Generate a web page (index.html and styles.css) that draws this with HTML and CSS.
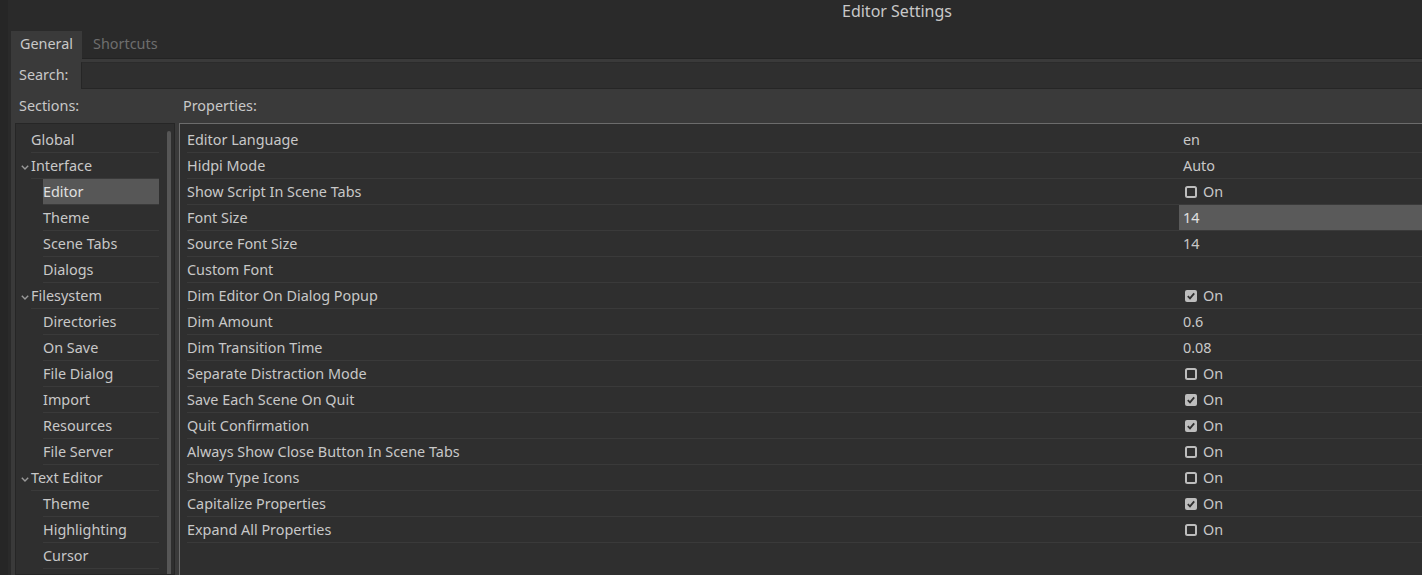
FILE: index.html
```html
<!DOCTYPE html>
<html>
<head>
<meta charset="utf-8">
<link rel="stylesheet" href="styles.css">
</head>
<body>
<div class="window">
  <div class="titlebar"><span class="title">Editor Settings</span></div>
  <div class="tabs">
    <div class="tab active">General</div>
    <div class="tab">Shortcuts</div>
  </div>
  <div class="panel">
    <div class="search-row">
      <div class="search-label">Search:</div>
      <div class="search-field"></div>
    </div>
    <div class="label-row">
      <div class="sec-label">Sections:</div>
      <div class="prop-label">Properties:</div>
    </div>
    <div class="content">
      <div class="tree">
        <div class="tree-list">
          <div class="titem l0"><span class="indent"></span><span class="tlabel">Global</span></div>
          <div class="titem l0"><span class="indent"><svg class="chev" width="8" height="5" viewBox="0 0 8 5"><polyline points="0.8,0.8 4,4 7.2,0.8" fill="none" stroke="#9a9a9a" stroke-width="1.4"/></svg></span><span class="tlabel">Interface</span></div>
          <div class="titem l1"><span class="indent"></span><span class="tlabel sel">Editor</span></div>
          <div class="titem l1"><span class="indent"></span><span class="tlabel">Theme</span></div>
          <div class="titem l1"><span class="indent"></span><span class="tlabel">Scene Tabs</span></div>
          <div class="titem l1"><span class="indent"></span><span class="tlabel">Dialogs</span></div>
          <div class="titem l0"><span class="indent"><svg class="chev" width="8" height="5" viewBox="0 0 8 5"><polyline points="0.8,0.8 4,4 7.2,0.8" fill="none" stroke="#9a9a9a" stroke-width="1.4"/></svg></span><span class="tlabel">Filesystem</span></div>
          <div class="titem l1"><span class="indent"></span><span class="tlabel">Directories</span></div>
          <div class="titem l1"><span class="indent"></span><span class="tlabel">On Save</span></div>
          <div class="titem l1"><span class="indent"></span><span class="tlabel">File Dialog</span></div>
          <div class="titem l1"><span class="indent"></span><span class="tlabel">Import</span></div>
          <div class="titem l1"><span class="indent"></span><span class="tlabel">Resources</span></div>
          <div class="titem l1"><span class="indent"></span><span class="tlabel">File Server</span></div>
          <div class="titem l0"><span class="indent"><svg class="chev" width="8" height="5" viewBox="0 0 8 5"><polyline points="0.8,0.8 4,4 7.2,0.8" fill="none" stroke="#9a9a9a" stroke-width="1.4"/></svg></span><span class="tlabel">Text Editor</span></div>
          <div class="titem l1"><span class="indent"></span><span class="tlabel">Theme</span></div>
          <div class="titem l1"><span class="indent"></span><span class="tlabel">Highlighting</span></div>
          <div class="titem l1"><span class="indent"></span><span class="tlabel">Cursor</span></div>
        </div>
        <div class="tree-scroll"><div class="thumb"></div></div>
      </div>
      <div class="props">
        <div class="prow"><div class="pname">Editor Language</div><div class="pval">en</div></div>
        <div class="prow"><div class="pname">Hidpi Mode</div><div class="pval">Auto</div></div>
        <div class="prow"><div class="pname">Show Script In Scene Tabs</div><div class="pval"><svg class="cb" width="12" height="12" viewBox="0 0 12 12"><rect x="1" y="1" width="10" height="10" rx="1.5" fill="none" stroke="#bdbdbd" stroke-width="2"/></svg><span>On</span></div></div>
        <div class="prow"><div class="pname">Font Size</div><div class="pval hl">14</div></div>
        <div class="prow"><div class="pname">Source Font Size</div><div class="pval">14</div></div>
        <div class="prow"><div class="pname">Custom Font</div><div class="pval"></div></div>
        <div class="prow"><div class="pname">Dim Editor On Dialog Popup</div><div class="pval"><svg class="cb" width="12" height="12" viewBox="0 0 12 12"><rect x="0" y="0" width="12" height="12" rx="2" fill="#bdbdbd"/><polyline points="2.8,6.2 5,8.4 9.2,3.4" fill="none" stroke="#2f2f2f" stroke-width="1.8"/></svg><span>On</span></div></div>
        <div class="prow"><div class="pname">Dim Amount</div><div class="pval">0.6</div></div>
        <div class="prow"><div class="pname">Dim Transition Time</div><div class="pval">0.08</div></div>
        <div class="prow"><div class="pname">Separate Distraction Mode</div><div class="pval"><svg class="cb" width="12" height="12" viewBox="0 0 12 12"><rect x="1" y="1" width="10" height="10" rx="1.5" fill="none" stroke="#bdbdbd" stroke-width="2"/></svg><span>On</span></div></div>
        <div class="prow"><div class="pname">Save Each Scene On Quit</div><div class="pval"><svg class="cb" width="12" height="12" viewBox="0 0 12 12"><rect x="0" y="0" width="12" height="12" rx="2" fill="#bdbdbd"/><polyline points="2.8,6.2 5,8.4 9.2,3.4" fill="none" stroke="#2f2f2f" stroke-width="1.8"/></svg><span>On</span></div></div>
        <div class="prow"><div class="pname">Quit Confirmation</div><div class="pval"><svg class="cb" width="12" height="12" viewBox="0 0 12 12"><rect x="0" y="0" width="12" height="12" rx="2" fill="#bdbdbd"/><polyline points="2.8,6.2 5,8.4 9.2,3.4" fill="none" stroke="#2f2f2f" stroke-width="1.8"/></svg><span>On</span></div></div>
        <div class="prow"><div class="pname">Always Show Close Button In Scene Tabs</div><div class="pval"><svg class="cb" width="12" height="12" viewBox="0 0 12 12"><rect x="1" y="1" width="10" height="10" rx="1.5" fill="none" stroke="#bdbdbd" stroke-width="2"/></svg><span>On</span></div></div>
        <div class="prow"><div class="pname">Show Type Icons</div><div class="pval"><svg class="cb" width="12" height="12" viewBox="0 0 12 12"><rect x="1" y="1" width="10" height="10" rx="1.5" fill="none" stroke="#bdbdbd" stroke-width="2"/></svg><span>On</span></div></div>
        <div class="prow"><div class="pname">Capitalize Properties</div><div class="pval"><svg class="cb" width="12" height="12" viewBox="0 0 12 12"><rect x="0" y="0" width="12" height="12" rx="2" fill="#bdbdbd"/><polyline points="2.8,6.2 5,8.4 9.2,3.4" fill="none" stroke="#2f2f2f" stroke-width="1.8"/></svg><span>On</span></div></div>
        <div class="prow"><div class="pname">Expand All Properties</div><div class="pval"><svg class="cb" width="12" height="12" viewBox="0 0 12 12"><rect x="1" y="1" width="10" height="10" rx="1.5" fill="none" stroke="#bdbdbd" stroke-width="2"/></svg><span>On</span></div></div>
      </div>
    </div>
  </div>
</div>
</body>
</html>
```
FILE: styles.css
```css
* { box-sizing: border-box; }
html, body {
  margin: 0;
  padding: 0;
  height: 575px;
  overflow: hidden;
  background: #2a2a2a;
}
body {
  font-family: "Noto Sans", "DejaVu Sans", sans-serif;
  font-size: 14.4px;
  color: #c8c8c8;
}
.window {
  height: 575px;
  display: flex;
  flex-direction: column;
  padding-left: 11px;
  background: linear-gradient(to right, #262626 0, #262626 8px, #2a2a2a 8px);
}
.titlebar {
  height: 31px;
  flex: none;
  padding-left: 831px;
  line-height: 22px;
}
.title { color: #c8c8c8; font-size: 16px; }
.tabs {
  display: flex;
  height: 28px;
  flex: none;
  border-bottom: 1px solid #232323;
}
.tab {
  height: 28px;
  line-height: 26px;
  padding: 0 9px 0 11px;
  color: #6e6e6e;
}
.tab.active {
  background: #3a3a3a;
  color: #c8c8c8;
  width: 71px;
  padding-left: 9px;
}
.panel {
  flex: 1;
  background: #3a3a3a;
  display: flex;
  flex-direction: column;
  padding: 3px 0 0 4px;
  min-height: 0;
}
.search-row {
  display: flex;
  height: 27px;
  flex: none;
}
.search-label {
  width: 66px;
  padding-left: 4px;
  line-height: 26px;
}
.search-field {
  flex: 1;
  background: #2f2f2f;
  border-left: 1px solid #262626;
  border-bottom: 1px solid #262626;
  border-top: 1px solid #2b2b2b;
}
.label-row {
  display: flex;
  height: 34px;
  flex: none;
  line-height: 34px;
}
.sec-label { width: 164px; padding-left: 4px; }
.prop-label { padding-left: 4px; }
.content {
  flex: 1;
  display: flex;
  gap: 4px;
  min-height: 0;
}
.tree {
  width: 160px;
  flex: none;
  background: #2f2f2f;
  border: 1px solid #262626;
  display: flex;
  padding-top: 3px;
}
.tree-list {
  width: 143px;
  flex: none;
}
.titem {
  display: flex;
  height: 26px;
}
.indent {
  flex: none;
  display: flex;
  justify-content: flex-end;
  align-items: center;
  padding-right: 2px;
  padding-top: 2px;
}
.l0 .indent { width: 15px; }
.l1 .indent { width: 27px; }
.tlabel {
  flex: 1;
  height: 26px;
  line-height: 25px;
  border-bottom: 1px solid #3a3a3a;
  white-space: nowrap;
}
.tlabel.sel {
  background: #575757;
  color: #e0e0e0;
}
.tree-scroll {
  margin-left: 8px;
  width: 4px;
  padding-top: 4px;
  display: flex;
}
.thumb {
  flex: 1;
  background: #565656;
  border-radius: 2px 2px 0 0;
}
.props {
  flex: 1;
  background: #2f2f2f;
  border-top: 1px solid #6c6c6c;
  border-left: 1px solid #6c6c6c;
  padding: 3px 0 0 7px;
}
.prow {
  display: flex;
  height: 26px;
  border-bottom: 1px solid #3a3a3a;
}
.pname {
  width: 992px;
  flex: none;
  line-height: 25px;
}
.pval {
  flex: 1;
  padding-left: 4px;
  line-height: 25px;
  display: flex;
  align-items: center;
}
.pval.hl { background: #5a5a5a; color: #e0e0e0; }
.cb { margin-left: 2px; margin-right: 6px; flex: none; }
```
